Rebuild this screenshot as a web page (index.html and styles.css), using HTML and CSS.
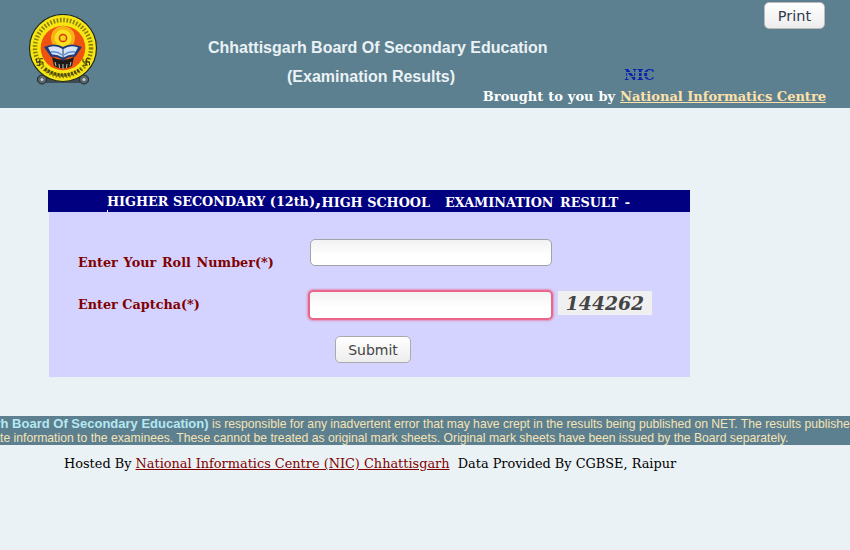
FILE: index.html
```html
<!DOCTYPE html>
<html lang="en">
<head>
<meta charset="utf-8">
<title>Examination Results</title>
<link rel="stylesheet" href="styles.css">
</head>
<body>
<header class="header">
  <div class="logo-col">
    <svg class="logo" width="70" height="72" viewBox="0 0 70 72" aria-label="CGBSE logo">
      <rect x="9" y="62" width="52" height="7" rx="3.5" fill="#3d4a50"/>
      <circle cx="14" cy="65.500" r="4.500" fill="#59666c" stroke="#20292d"/>
      <circle cx="14" cy="65.500" r="1.500" fill="#c5cdd0"/>
      <circle cx="56" cy="65.500" r="4.500" fill="#59666c" stroke="#20292d"/>
      <circle cx="56" cy="65.500" r="1.500" fill="#c5cdd0"/>
      <circle cx="35" cy="34" r="33.500" fill="#f7e613" stroke="#1e2a20" stroke-width="1.200"/>
      <circle cx="35" cy="34" r="28" fill="none" stroke="#50480c" stroke-width="4.500" stroke-dasharray="1.600 1.700" opacity=".65"/>
      <circle cx="35" cy="34" r="22.300" fill="#f0530f"/>
      <circle cx="35" cy="24" r="12" fill="#f8b215"/>
      <circle cx="35" cy="24" r="8.500" fill="#f7e020"/>
      <circle cx="35" cy="24" r="3.600" fill="#f7d818" stroke="#d93410" stroke-width="1.500"/>
      <path d="M24 43Q35 49 46 43L44 52Q35 57 26 52Z" fill="#1d1b18"/>
      <path d="M27 48 28 52M31 50 31.500 54M35 50V55M39 50 38.500 54M43 48 42 52" stroke="#d9d5c8" stroke-width=".9"/>
      <path d="M16 33Q27 28 35 33Q43 28 54 33L47 43Q40 42 35 47Q30 42 23 43Z" fill="#1f3a78"/>
      <path d="M20 33.500Q28 30.500 34.500 35V43.500Q29 40 24 40.500Z" fill="#d6e4f6"/>
      <path d="M50 33.500Q42 30.500 35.500 35V43.500Q41 40 46 40.500Z" fill="#d6e4f6"/>
      <path d="M23 38Q29 37 34 41M47 38Q41 37 36 41" fill="none" stroke="#5f8cd0" stroke-width="1.500"/>
      <path d="M8.500 48H15M11.750 44.750V51.250M8.500 44.750V48M15 48V51.250M11.750 44.750H15M8.500 51.250H11.750" fill="none" stroke="#241f08" stroke-width=".9"/>
      <path d="M55 48H61.500M58.250 44.750V51.250M55 44.750V48M61.500 48V51.250M58.250 44.750H61.500M55 51.250H58.250" fill="none" stroke="#241f08" stroke-width=".9"/>
      <path d="M17 55Q35 67 53 55" fill="none" stroke="#50480c" stroke-width="3.500" stroke-dasharray="2 1.400"/>
    </svg>
  </div>
  <div class="title-col">
    <h1 class="title">Chhattisgarh Board Of Secondary Education</h1>
    <h2 class="subtitle">(Examination Results)</h2>
  </div>
  <div class="right-col">
    <button class="btn btn-print" type="button">Print</button>
    <span class="nic">NIC</span>
    <p class="brought">Brought to you by <a href="#">National Informatics Centre</a></p>
  </div>
</header>

<main class="card">
  <div class="card-head"><span class="head-main">HIGHER SECONDARY (12th)</span><span class="comma">,</span><span class="head-rest">HIGH SCHOOL</span><span class="head-exam">EXAMINATION RESULT -</span></div>
  <form class="card-body">
    <div class="row row-roll">
      <label class="label" for="roll">Enter Your Roll Number(*)</label>
      <input class="field" id="roll" type="text">
    </div>
    <div class="row row-captcha">
      <label class="label" for="cap">Enter Captcha(*)</label>
      <input class="field field-focus" id="cap" type="text">
      <span class="captcha">144262</span>
    </div>
    <div class="row-submit">
      <button class="btn btn-submit" type="button">Submit</button>
    </div>
  </form>
</main>

<section class="notice">
  <p class="line line-one"><b>(Chhattisgarh Board Of Secondary Education)</b> is responsible for any inadvertent error that may have crept in the results being published on NET. The results published here</p>
  <p class="line line-two">immediate information to the examinees. These cannot be treated as original mark sheets. Original mark sheets have been issued by the Board separately.</p>
</section>

<footer class="footer">Hosted By <a href="#">National Informatics Centre (NIC) Chhattisgarh</a> &nbsp;Data Provided By CGBSE, Raipur</footer>
</body>
</html>
```

FILE: styles.css
```css
* { box-sizing: border-box; }

html, body { margin: 0; height: 100%; overflow: hidden; }

body {
  background: #ebf2f5;
  font-family: "DejaVu Serif", serif;
  color: #000;
}

.header {
  display: grid;
  grid-template-columns: 208px 275px minmax(0, 1fr);
  height: 108px;
  background: #5c8090;
}

.logo-col { padding: 14px 0 0 28px; }
.logo { display: block; }

.title-col { white-space: nowrap; padding-top: 39px; }

.title, .subtitle {
  margin: 0;
  font-family: "Liberation Sans", Arial, sans-serif;
  font-weight: bold;
  font-size: 16px;
  line-height: 18px;
  color: #ebf2f5;
}

.subtitle { margin: 11px 0 0 79px; }

.right-col {
  display: flex;
  flex-direction: column;
  align-items: flex-end;
  padding: 2px 24px 0 0;
}

.btn {
  font-family: "DejaVu Sans", sans-serif;
  font-size: 14px;
  color: #444;
  background: linear-gradient(#fff, #ededed);
  border: 1px solid #bbb;
  border-radius: 5px;
  padding: 0;
}

.btn-print { width: 61px; height: 27px; margin-right: 1px; font-size: 14.5px; color: #333b4d; }

.nic {
  margin: 40px 171px 0 0;
  height: 13px;
  width: 31px;
  font: bold 14px/13px "DejaVu Serif", serif;
  text-align: center;
  color: transparent;
  background: repeating-linear-gradient(#0a1fb0 0 3px, #5a7c8e 3px 4px);
  -webkit-background-clip: text;
  background-clip: text;
}

.brought {
  margin: 7px 0 0;
  white-space: nowrap;
  font-size: 13px;
  line-height: 16px;
  font-weight: bold;
  word-spacing: .4px;
  color: #fff;
}

.brought a { color: #ffe0a8; word-spacing: 0; }

.card {
  width: 642px;
  margin: 82px 0 0 48px;
}

.card-head {
  height: 22px;
  padding-left: 59px;
  background: linear-gradient(#fff, #fff) 59px 20px / 1px 2px no-repeat, #000080;
  color: #fff;
  font-size: 12.8px;
  font-weight: bold;
  line-height: 23px;
  white-space: nowrap;
}

.comma { font-size: 19px; line-height: 18px; }
.head-rest, .head-exam { vertical-align: -1px; }
.head-exam { margin-left: 15px; word-spacing: 2px; }

.card-body {
  margin-left: 1px;
  height: 165px;
  background: #d4d3ff;
  display: flex;
  flex-direction: column;
}

.row { display: flex; align-items: flex-start; }

.label {
  flex: none;
  width: 261px;
  padding: 15px 0 0 29px;
  font-size: 12.8px;
  line-height: 18px;
  font-weight: bold;
  white-space: nowrap;
  color: #800000;
}

.row-roll { margin-top: 27px; height: 27px; }
.row-roll .label { word-spacing: 1.3px; }

.row-captcha { margin-top: 24px; height: 30px; }
.row-captcha .label { width: 259px; padding-top: 6px; }

.field {
  width: 242px;
  height: 27px;
  padding: 0 6px;
  border: 1px solid #a3a3a3;
  border-radius: 5px;
  background: linear-gradient(#f2f2f2, #fff 60%);
}

.field-focus {
  width: 245px;
  height: 30px;
  border: 2px solid #e8668a;
  box-shadow: 0 0 2px 1px rgba(232, 102, 138, .6);
}

.captcha {
  margin: 1px 0 0 5px;
  width: 94px;
  height: 24px;
  background: #f0f0f0;
  color: #444;
  font-size: 18.8px;
  line-height: 24px;
  font-weight: bold;
  font-style: italic;
  text-align: center;
}

.row-submit { margin: 16px 0 0 286px; }

.btn-submit { width: 76px; height: 27px; border-color: #aaa; }

.notice {
  margin-top: 39px;
  height: 29px;
  padding-top: 1px;
  background: #5c8090;
  overflow: hidden;
  color: #f6e3b4;
  font-family: "Liberation Sans", Arial, sans-serif;
  font-size: 12.18px;
  line-height: 14px;
}

.line { margin: 0; white-space: nowrap; }
.line b { color: #b6e8f2; font-size: 13px; }
.line-one { margin-left: -76px; }
.line-two { margin-left: -46px; }

.footer {
  margin: 10px 0 0 64px;
  font-size: 12.88px;
  line-height: 18px;
  white-space: nowrap;
}

.footer a { color: #800000; }
```
